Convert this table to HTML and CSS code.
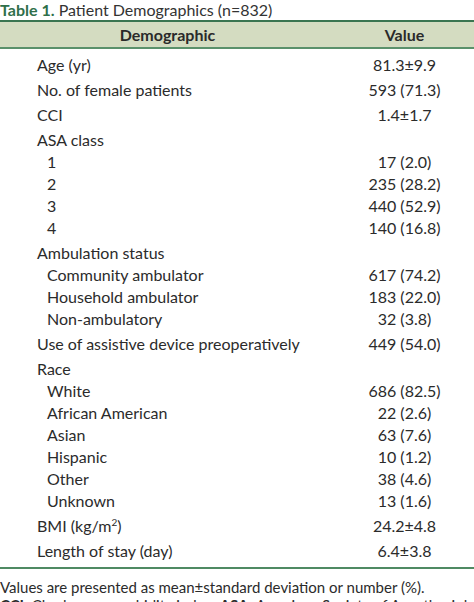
FILE: index.html
```html
<!DOCTYPE html>
<html>
<head>
<meta charset="utf-8">
<link rel="stylesheet" href="styles.css">
</head>
<body>
<div class="page">
  <div class="title"><span class="label">Table 1.</span> Patient Demographics (n=832)</div>
  <div class="table">
    <div class="head">
      <div class="c1">Demographic</div>
      <div class="c2">Value</div>
    </div>
    <div class="body">
      <div class="row top"><div class="c1">Age (yr)</div><div class="c2">81.3±9.9</div></div>
      <div class="row top"><div class="c1">No. of female patients</div><div class="c2">593 (71.3)</div></div>
      <div class="row top"><div class="c1">CCI</div><div class="c2">1.4±1.7</div></div>
      <div class="row top"><div class="c1">ASA class</div><div class="c2"></div></div>
      <div class="row sub"><div class="c1">1</div><div class="c2">17 (2.0)</div></div>
      <div class="row sub"><div class="c1">2</div><div class="c2">235 (28.2)</div></div>
      <div class="row sub"><div class="c1">3</div><div class="c2">440 (52.9)</div></div>
      <div class="row sub"><div class="c1">4</div><div class="c2">140 (16.8)</div></div>
      <div class="row top"><div class="c1">Ambulation status</div><div class="c2"></div></div>
      <div class="row sub"><div class="c1">Community ambulator</div><div class="c2">617 (74.2)</div></div>
      <div class="row sub"><div class="c1">Household ambulator</div><div class="c2">183 (22.0)</div></div>
      <div class="row sub"><div class="c1">Non-ambulatory</div><div class="c2">32 (3.8)</div></div>
      <div class="row top"><div class="c1">Use of assistive device preoperatively</div><div class="c2">449 (54.0)</div></div>
      <div class="row top"><div class="c1">Race</div><div class="c2"></div></div>
      <div class="row sub"><div class="c1">White</div><div class="c2">686 (82.5)</div></div>
      <div class="row sub"><div class="c1">African American</div><div class="c2">22 (2.6)</div></div>
      <div class="row sub"><div class="c1">Asian</div><div class="c2">63 (7.6)</div></div>
      <div class="row sub"><div class="c1">Hispanic</div><div class="c2">10 (1.2)</div></div>
      <div class="row sub"><div class="c1">Other</div><div class="c2">38 (4.6)</div></div>
      <div class="row sub"><div class="c1">Unknown</div><div class="c2">13 (1.6)</div></div>
      <div class="row top"><div class="c1">BMI (kg/m<sup>2</sup>)</div><div class="c2">24.2±4.8</div></div>
      <div class="row top"><div class="c1">Length of stay (day)</div><div class="c2">6.4±3.8</div></div>
    </div>
  </div>
  <div class="notes">
    <p>Values are presented as mean±standard deviation or number (%).</p>
    <p><b>CCI:</b> Charlson comorbidity index; <b>ASA:</b> American Society of Anesthesiologists.</p>
  </div>
</div>
</body>
</html>
```
FILE: styles.css
```css
html, body {
  margin: 0;
  padding: 0;
  background: #ffffff;
}
.page {
  font-family: Lato, "Open Sans", sans-serif;
  color: #2b2b2b;
  font-size: 16px;
  width: 474px;
  height: 602px;
  overflow: hidden;
}
.title {
  font-size: 16px;
  line-height: 20px;
  height: 20px;
  white-space: nowrap;
  color: #333333;
}
.title .label {
  color: #2f6f4a;
  font-weight: bold;
}
.table {
  border-top: 2px solid #3a7551;
  border-bottom: 2px solid #4f8a63;
}
.head {
  display: flex;
  background: #d4dcc1;
  border-bottom: 2px solid #5a916b;
  height: 25px;
  line-height: 25px;
  font-weight: bold;
  color: #2a2a2a;
}
.head .c1 {
  width: 335px;
  text-align: center;
}
.head .c2 {
  flex: 1;
  text-align: center;
}
.body {
  padding: 2px 0 5px;
}
.row {
  display: flex;
  line-height: 22px;
  height: 22px;
}
.row.top {
  margin-top: 3px;
}
.row .c1 {
  width: 335px;
  padding-left: 37px;
  box-sizing: border-box;
  white-space: nowrap;
}
.row.sub .c1 {
  padding-left: 47px;
}
.row .c2 {
  flex: 1;
  text-align: center;
  white-space: nowrap;
}
sup {
  font-size: 10px;
  line-height: 0;
  vertical-align: 6px;
}
.notes {
  font-size: 15px;
  line-height: 18px;
  padding-top: 9px;
}
.notes p {
  margin: 0;
  white-space: nowrap;
}
```
